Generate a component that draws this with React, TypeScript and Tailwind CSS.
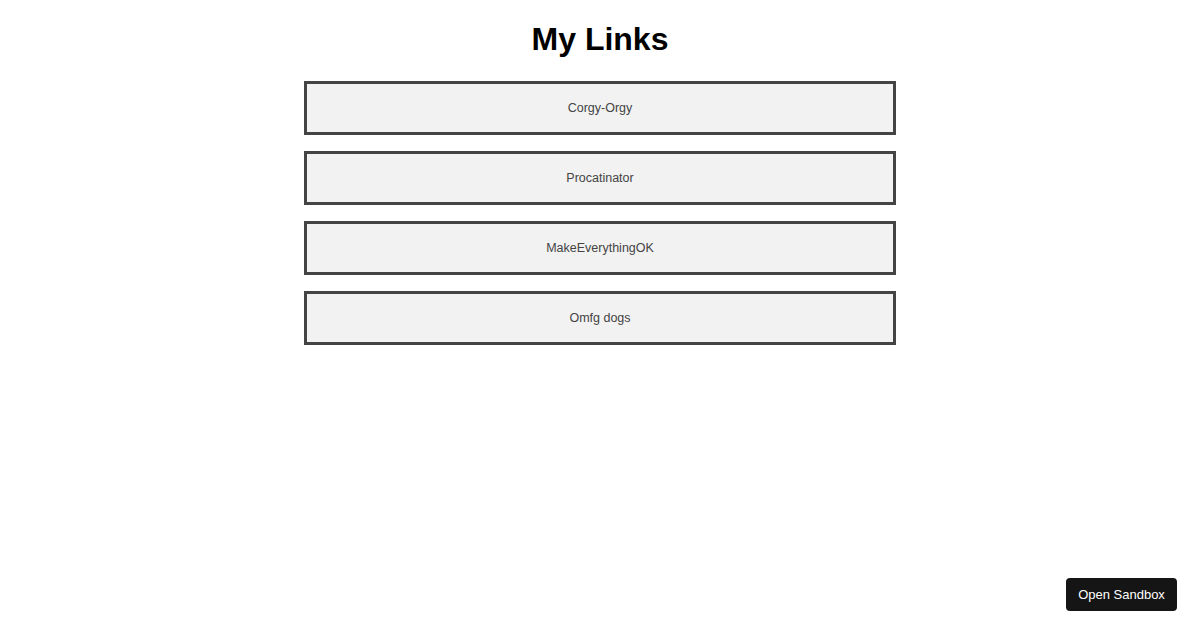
const links = ["Corgy-Orgy", "Procatinator", "MakeEverythingOK", "Omfg dogs"];

export default function App() {
  return (
    <div className="relative h-[630px] w-full bg-white font-['Liberation_Sans',Arial,sans-serif]">
      <h1 className="pt-[21px] text-center text-[32px] font-bold leading-[37px] text-black">
        My Links
      </h1>

      <div className="mx-auto mt-[23px] flex w-[592px] flex-col gap-4">
        {links.map((name) => (
          <a
            key={name}
            href="#"
            className="flex h-[54px] items-center justify-center border-[3px] border-[#444444] bg-[#f2f2f2] text-[12.5px] text-[#444444]"
          >
            {name}
          </a>
        ))}
      </div>

      {/* floating sandbox button */}
      <button className="absolute bottom-[19px] right-[23px] h-[33px] w-[111px] rounded-[4px] bg-[#151515] text-[13px] text-white">
        Open Sandbox
      </button>
    </div>
  );
}
